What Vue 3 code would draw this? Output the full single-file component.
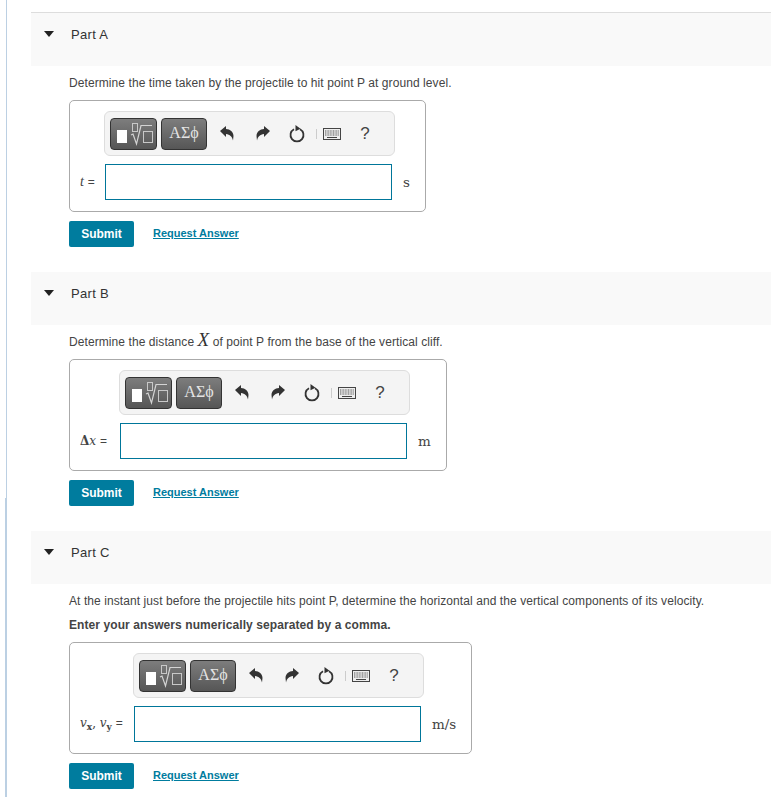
<script setup>
const parts = [
  {
    name: 'Part A',
    kind: 'a',
    unit: 's'
  },
  {
    name: 'Part B',
    kind: 'b',
    unit: 'm'
  },
  {
    name: 'Part C',
    kind: 'c',
    unit: 'm/s'
  }
]
</script>

<template>
  <div class="page">
    <div class="rail rail-top"></div>
    <div class="rail rail-bottom"></div>

    <section v-for="part in parts" :key="part.name" class="part">
      <header class="part-head">
        <svg class="caret" width="10" height="6" viewBox="0 0 10 6"><path d="M0 0h10L5 6z" fill="#222" /></svg>
        <h2>{{ part.name }}</h2>
      </header>

      <div class="part-body">
        <p v-if="part.kind === 'a'" class="question">Determine the time taken by the projectile to hit point P at ground level.</p>
        <p v-if="part.kind === 'b'" class="question">Determine the distance <i class="big-x">X</i> of point P from the base of the vertical cliff.</p>
        <template v-if="part.kind === 'c'">
          <p class="question line-c">At the instant just before the projectile hits point P, determine the horizontal and the vertical components of its velocity.</p>
          <p class="question hint">Enter your answers numerically separated by a comma.</p>
        </template>

        <div class="answer-box">
          <div class="toolbar">
            <button class="tool-btn templates" type="button" aria-label="Templates">
              <svg width="45" height="30" viewBox="0 0 45 30">
                <rect x="6" y="11" width="10" height="13" fill="#fff" />
                <rect x="21.5" y="4.5" width="5" height="8" fill="none" stroke="#c8c8c8" />
                <path d="M20 16l2 -1 3.5 10 4.500 -18.500h11" fill="none" stroke="#d4d4d4" stroke-width="1.200" />
                <rect x="32.500" y="12.500" width="9" height="11" fill="none" stroke="#c8c8c8" />
              </svg>
            </button>
            <button class="tool-btn symbols" type="button">ΑΣϕ</button>

            <span class="slot slot-undo">
              <svg width="14" height="15" viewBox="0 0 14 15"><path d="M0 5L6 0v3C10 3 13.500 6 13.500 10L13 14.500C12 10.500 10 8.500 6 8v3z" fill="#333" /></svg>
            </span>
            <span class="slot slot-redo">
              <svg width="14" height="15" viewBox="0 0 14 15"><path d="M14 5L8 0v3C4 3 .5 6 .5 10L1 14.500C2 10.500 4 8.500 8 8v3z" fill="#333" /></svg>
            </span>
            <span class="slot slot-reset">
              <svg width="16" height="18" viewBox="0 0 16 18">
                <path d="M5 4.200a6.500 6.500 0 1 0 6 0" fill="none" stroke="#333" stroke-width="1.800" />
                <path d="M6.500 0l5 3.800-5 2.500z" fill="#333" />
              </svg>
            </span>
            <span class="sep"></span>
            <span class="slot slot-kbd">
              <svg width="18" height="12" viewBox="0 0 18 12">
                <rect x=".5" y=".5" width="17" height="11" fill="#eee" stroke="#444" />
                <path d="M2 3h14M2 5h14M2 7h14" stroke="#555" stroke-dasharray="1 .6" />
                <path d="M4 9.500h10" stroke="#444" />
              </svg>
            </span>
            <span class="slot slot-help">?</span>
          </div>

          <div class="label" :class="'label-' + part.kind">
            <template v-if="part.kind === 'a'"><i class="var-t">t</i> <span class="eq">=</span></template>
            <template v-if="part.kind === 'b'"><span class="delta">Δ</span><i>x</i> <span class="eq">=</span></template>
            <template v-if="part.kind === 'c'"><i>v</i><sub>x</sub>, <i>v</i><sub>y</sub> <span class="eq">=</span></template>
          </div>
          <input class="answer" type="text" />
          <div class="unit">{{ part.unit }}</div>
        </div>

        <div class="actions">
          <button class="submit" type="button">Submit</button>
          <a class="request" href="#" @click.prevent>Request Answer</a>
        </div>
      </div>
    </section>
  </div>
</template>

<style scoped>
.page {
  position: relative;
  height: 797px;
  overflow: hidden;
  padding: 12px 0 0 31px;
  box-sizing: border-box;
  font-family: "Liberation Sans", Arial, sans-serif;
  color: #333;
  background: #fff;
}

/* decorative line on the left edge */
.rail {
  position: absolute;
  background: #bcd0e3;
}
.rail-top {
  left: 6px;
  top: 0;
  width: 1px;
  height: 498px;
}
.rail-bottom {
  left: 5px;
  top: 498px;
  width: 2px;
  bottom: 0;
}

.part {
  margin-bottom: 25px;
}
.part-head {
  display: flex;
  align-items: flex-start;
  height: 53px;
  padding: 14px 0 0 13px;
  box-sizing: border-box;
  background: #f9f9f9;
}
.part:first-of-type .part-head {
  height: 54px;
  border-top: 1px solid #ddd;
}
.caret {
  margin-top: 4px;
}
h2 {
  margin: 0 0 0 17px;
  font-size: 13px;
  font-weight: 400;
  line-height: 16px;
  letter-spacing: .3px;
  color: #333;
}

.part-body {
  padding: 9px 0 0 38px;
}
.question {
  margin: 0 0 9px;
  height: 16px;
  font-size: 12px;
  line-height: 16px;
  letter-spacing: .08px;
  color: #444;
}
.line-c {
  margin-bottom: 8px;
}
.hint {
  font-weight: 700;
  color: #444;
}
.big-x {
  font-family: "Liberation Serif", serif;
  font-size: 19px;
  line-height: 0;
  color: #333;
}

.answer-box {
  display: grid;
  grid-template-columns: auto 287px auto;
  align-items: center;
  width: fit-content;
  box-sizing: border-box;
  padding: 10px 15px 11px 10px;
  border: 1px solid #aaa;
  border-radius: 5px;
}
.toolbar {
  grid-column: 2 / 4;
  display: flex;
  align-items: center;
  width: 291px;
  height: 45px;
  box-sizing: border-box;
  margin: 0 0 8px -1px;
  padding-left: 5px;
  background: #f4f4f4;
  border: 1px solid #ddd;
  border-radius: 6px;
}
.tool-btn {
  height: 32px;
  padding: 0;
  border: 1px solid #333;
  border-radius: 4px;
  background: linear-gradient(#7d7d7d, #565656);
  color: #e4e4e4;
  display: flex;
  align-items: center;
  justify-content: center;
}
.templates {
  width: 47px;
}
.symbols {
  width: 46px;
  margin-left: 4px;
  padding-bottom: 2px;
  font-family: "Liberation Serif", serif;
  font-size: 16px;
}
.slot {
  display: flex;
  align-items: center;
  justify-content: center;
}
.slot-undo {
  width: 36px;
  margin-left: 2px;
}
.slot-redo {
  width: 36px;
}
.slot-reset {
  width: 30px;
  margin-left: 1px;
}
.sep {
  width: 1px;
  height: 10px;
  margin-left: 4px;
  background: #ccc;
}
.slot-kbd {
  margin-left: 6px;
}
.slot-help {
  width: 36px;
  margin-left: 6px;
  font-size: 17px;
  color: #444;
}

.label {
  font-family: "DejaVu Serif", serif;
  font-size: 12px;
  color: #444;
  white-space: nowrap;
}
.label-a {
  width: 25px;
}
.label-b {
  width: 40px;
}
.label-c {
  width: 54px;
}
.var-t {
  font-family: "Liberation Serif", serif;
  font-size: 14px;
}
.delta {
  font-size: 12px;
  font-weight: 700;
}
.eq {
  font-family: "Liberation Sans", sans-serif;
  font-size: 12px;
}
.label sub {
  font-size: 9px;
  font-weight: 700;
}
.answer {
  width: 287px;
  height: 36px;
  box-sizing: border-box;
  margin: 0;
  padding: 0;
  border: 1px solid #00769a;
  background: #fff;
  outline: none;
}
.unit {
  padding-left: 11px;
  font-family: "DejaVu Serif", serif;
  font-size: 13.5px;
  color: #444;
}

.actions {
  display: flex;
  align-items: center;
  margin-top: 9px;
}
.submit {
  width: 65px;
  height: 26px;
  padding: 0;
  border: 0;
  border-radius: 2px;
  background: #007c9e;
  color: #fff;
  font-family: "Liberation Sans", Arial, sans-serif;
  font-size: 12px;
  font-weight: 700;
}
.request {
  margin: -2px 0 0 19px;
  font-size: 11px;
  font-weight: 700;
  color: #007c9e;
}
</style>

<style>
html, body {
  margin: 0;
  background: #fff;
}
</style>
